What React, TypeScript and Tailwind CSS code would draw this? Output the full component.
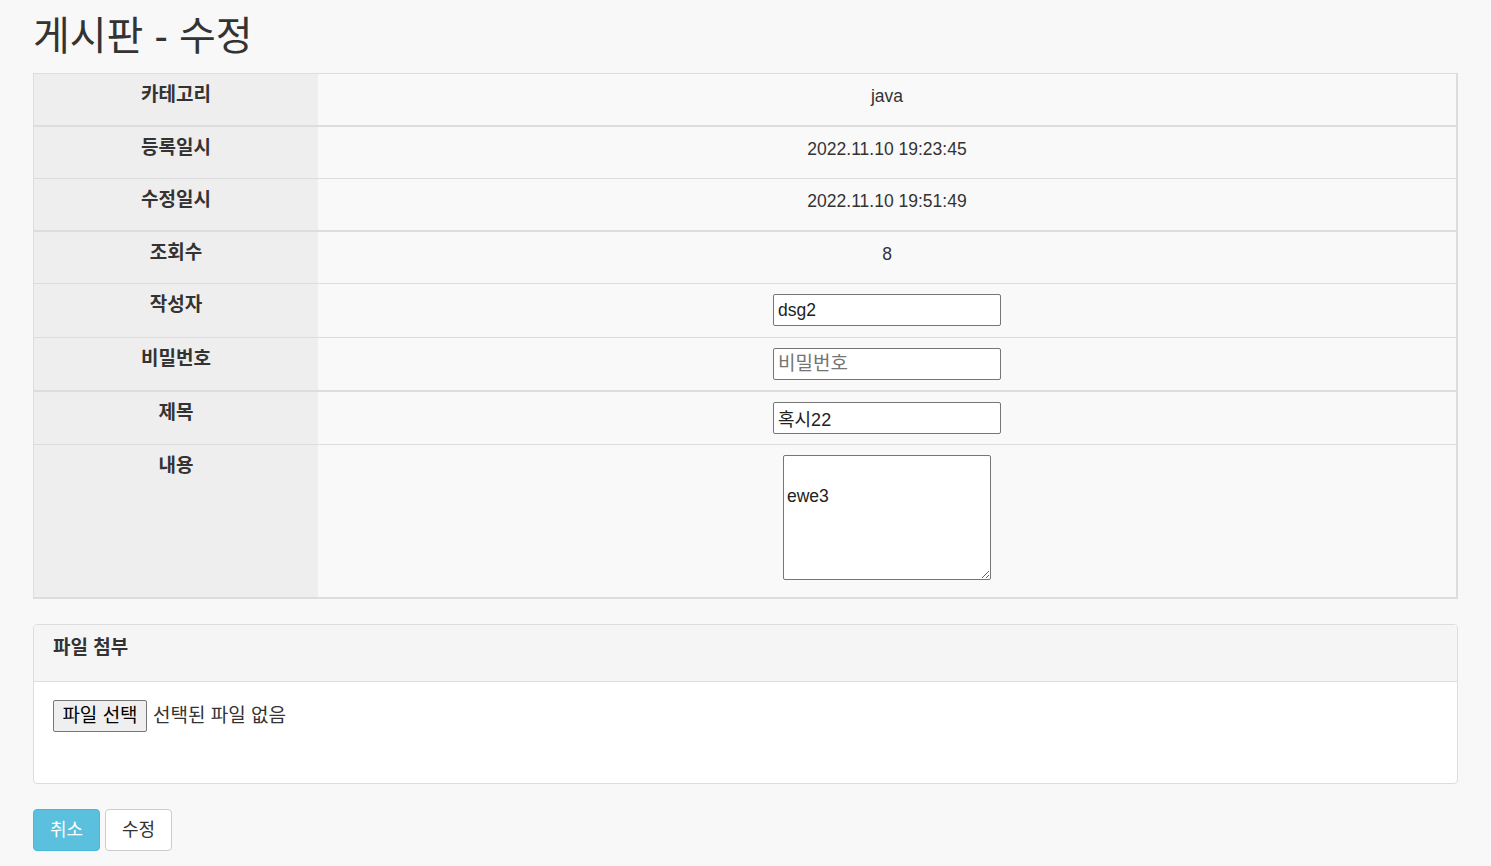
import { ReactNode } from 'react';

const FONT = { fontFamily: '"Liberation Sans", "Noto Sans CJK KR", sans-serif' };

type Row = {
  label: string;
  height: string;
  border: string;
  value: ReactNode;
};

function Label({ text }: { text: string }) {
  return (
    <div className="bg-[#eeeeee] pt-[9px] text-center text-[19px] font-bold leading-[24px] text-[#333]">
      {text}
    </div>
  );
}

function TextValue({ text }: { text: string }) {
  return <div className="pt-[10px] text-center text-[17.5px] leading-[24px] text-[#333]">{text}</div>;
}

function InputValue({ value, placeholder, size }: { value?: string; placeholder?: string; size: string }) {
  return (
    <div className="flex justify-center pt-[10px]">
      <input
        type="text"
        defaultValue={value}
        placeholder={placeholder}
        style={FONT}
        className={`h-[32px] w-[228px] rounded-[2px] border border-[#767676] bg-white px-[4px] text-[#222] placeholder:text-[#757575] outline-none ${size}`}
      />
    </div>
  );
}

export default function App() {
  const rows: Row[] = [
    { label: '카테고리', height: 'h-[52px]', border: 'border-t', value: <TextValue text="java" /> },
    { label: '등록일시', height: 'h-[53px]', border: 'border-t-2', value: <TextValue text="2022.11.10 19:23:45" /> },
    { label: '수정일시', height: 'h-[52px]', border: 'border-t', value: <TextValue text="2022.11.10 19:51:49" /> },
    { label: '조회수', height: 'h-[53px]', border: 'border-t-2', value: <TextValue text="8" /> },
    { label: '작성자', height: 'h-[54px]', border: 'border-t', value: <InputValue value="dsg2" size="text-[17.5px]" /> },
    { label: '비밀번호', height: 'h-[53px]', border: 'border-t', value: <InputValue placeholder="비밀번호" size="text-[19px]" /> },
    { label: '제목', height: 'h-[54px]', border: 'border-t-2', value: <InputValue value="혹시22" size="text-[18px]" /> },
    {
      label: '내용',
      height: 'h-[153px]',
      border: 'border-t',
      value: (
        <div className="flex justify-center pt-[10px]">
          <textarea
            defaultValue="ewe3"
            style={FONT}
            className="h-[125px] w-[208px] rounded-[2px] border border-[#767676] bg-white px-[3px] pt-[30px] text-[17.5px] leading-[20px] text-[#222] outline-none"
          />
        </div>
      ),
    },
  ];

  return (
    <div style={FONT} className="min-h-[866px] bg-[#f8f8f8] px-[33px] pb-[20px] text-[#333]">
      <h1 className="pt-[15px] pb-[16px] text-[40px] font-normal leading-[42px] text-[#333]">게시판 - 수정</h1>

      {/* 상세 테이블 */}
      <div className="border-b-2 border-l border-r-2 border-[#dddddd]">
        {rows.map((row) => (
          <div
            key={row.label}
            className={`grid grid-cols-[284px_1fr] border-[#dddddd] bg-[#f9f9f9] ${row.border} ${row.height}`}
          >
            <Label text={row.label} />
            {row.value}
          </div>
        ))}
      </div>

      {/* 파일 첨부 */}
      <div className="mt-[25px] overflow-hidden rounded-[4px] border border-[#dddddd] bg-white">
        <div className="h-[57px] border-b border-[#dddddd] bg-[#f5f5f5] px-[19px] pt-[11px] text-[19px] font-bold leading-[24px] text-[#333]">
          파일 첨부
        </div>
        <div className="flex h-[101px] items-start gap-[6px] px-[19px] pt-[18px]">
          <button
            type="button"
            style={FONT}
            className="h-[32px] w-[94px] rounded-[2px] border border-[#767676] bg-[#efefef] text-[19px] leading-[20px] text-black"
          >
            파일 선택
          </button>
          <span className="text-[19px] leading-[32px] text-[#333]">선택된 파일 없음</span>
        </div>
      </div>

      {/* 버튼 */}
      <div className="mt-[25px] flex gap-[5px]">
        <button
          type="button"
          style={FONT}
          className="h-[42px] w-[67px] rounded-[4px] border border-[#46b8da] bg-[#5bc0de] text-[18px] text-white"
        >
          취소
        </button>
        <button
          type="button"
          style={FONT}
          className="h-[42px] w-[67px] rounded-[4px] border border-[#cccccc] bg-white text-[18px] text-[#333]"
        >
          수정
        </button>
      </div>
    </div>
  );
}
